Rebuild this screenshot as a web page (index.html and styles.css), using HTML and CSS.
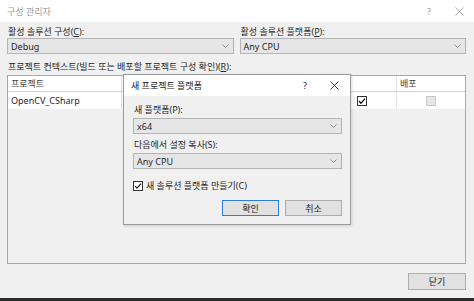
FILE: index.html
```html
<!DOCTYPE html>
<html lang="ko">
<head>
    <meta charset="UTF-8">
    <meta name="viewport" content="width=device-width, initial-scale=1.0">
    <title>구성 관리자</title>
    <link rel="stylesheet" href="styles.css">
</head>
<body>
<div class="window">
    <!-- Title bar -->
    <div class="titlebar">
        <span class="title">구성 관리자</span>
        <span class="tb-buttons">
            <span class="help">?</span>
            <svg class="close" width="9" height="9" viewBox="0 0 9 9"><path d="M0.5 0.5 L8.5 8.5 M8.5 0.5 L0.5 8.5" stroke="currentColor" stroke-width="0.9" fill="none"/></svg>
        </span>
    </div>

    <div class="content">
        <div class="top-row">
            <div class="field">
                <div class="label">활성 솔루션 구성(<u>C</u>):</div>
                <div class="select">
                    <span>Debug</span>
                    <svg class="chev" width="7" height="4" viewBox="0 0 7 4"><path d="M0.5 0.5 L3.5 3.5 L6.5 0.5" stroke="#8a8a8a" stroke-width="0.9" fill="none"/></svg>
                </div>
            </div>
            <div class="field">
                <div class="label">활성 솔루션 플랫폼(<u>P</u>):</div>
                <div class="select">
                    <span>Any CPU</span>
                    <svg class="chev" width="7" height="4" viewBox="0 0 7 4"><path d="M0.5 0.5 L3.5 3.5 L6.5 0.5" stroke="#8a8a8a" stroke-width="0.9" fill="none"/></svg>
                </div>
            </div>
        </div>

        <div class="label context-label">프로젝트 컨텍스트(빌드 또는 배포할 프로젝트 구성 확인)(<u>R</u>):</div>

        <!-- Project grid (the middle headers sit under the dialog) -->
        <div class="grid">
            <div class="grid-head">
                <div class="cell c-proj">프로젝트</div>
                <div class="cell c-conf"></div>
                <div class="cell c-plat"></div>
                <div class="cell c-build"></div>
                <div class="cell c-deploy">배포</div>
            </div>
            <div class="grid-row">
                <div class="cell c-proj">OpenCV_CSharp</div>
                <div class="cell c-conf"></div>
                <div class="cell c-plat"></div>
                <div class="cell c-build">
                    <svg class="check" width="10" height="10" viewBox="0 0 10 10"><rect x="0.5" y="0.5" width="9" height="9" fill="#fff" stroke="#333"/><path d="M2 5 L4 7.2 L8 2.6" stroke="#111" stroke-width="1.3" fill="none"/></svg>
                </div>
                <div class="cell c-deploy center">
                    <svg class="check" width="10" height="10" viewBox="0 0 10 10"><rect x="0.5" y="0.5" width="9" height="9" fill="#e6e6e6" stroke="#c8c8c8"/></svg>
                </div>
            </div>
        </div>

        <div class="actions">
            <button class="btn">닫기</button>
        </div>
    </div>

    <!-- New project platform dialog -->
    <div class="modal">
        <div class="modal-title">
            <span>새 프로젝트 플랫폼</span>
            <span class="tb-buttons dark">
                <span class="help">?</span>
                <svg class="close" width="9" height="9" viewBox="0 0 9 9"><path d="M0.5 0.5 L8.5 8.5 M8.5 0.5 L0.5 8.5" stroke="currentColor" stroke-width="0.9" fill="none"/></svg>
            </span>
        </div>
        <div class="modal-body">
            <div class="label">새 플랫폼(P):</div>
            <div class="select">
                <span>x64</span>
                <svg class="chev" width="7" height="4" viewBox="0 0 7 4"><path d="M0.5 0.5 L3.5 3.5 L6.5 0.5" stroke="#8a8a8a" stroke-width="0.9" fill="none"/></svg>
            </div>
            <div class="label">다음에서 설정 복사(S):</div>
            <div class="select">
                <span>Any CPU</span>
                <svg class="chev" width="7" height="4" viewBox="0 0 7 4"><path d="M0.5 0.5 L3.5 3.5 L6.5 0.5" stroke="#8a8a8a" stroke-width="0.9" fill="none"/></svg>
            </div>
            <div class="checkbox-row">
                <svg width="10" height="10" viewBox="0 0 10 10"><rect x="0.5" y="0.5" width="9" height="9" fill="#fff" stroke="#333"/><path d="M2 5 L4 7.2 L8 2.6" stroke="#111" stroke-width="1.1" fill="none"/></svg>
                <span>새 솔루션 플랫폼 만들기(C)</span>
            </div>
            <div class="modal-actions">
                <button class="btn primary">확인</button>
                <button class="btn">취소</button>
            </div>
        </div>
    </div>
</div>
<div class="taskbar"></div>
</body>
</html>
```

FILE: styles.css
```css
body {
    margin: 0;
    width: 474px;
    height: 301px;
    overflow: hidden;
    background: #f0f0f0;
    font-family: "Noto Sans", "Noto Sans CJK KR", sans-serif;
    font-size: 9px;
    color: #262626;
}
.window {
    position: relative;
    height: 298px;
    display: flex;
    flex-direction: column;
}
.titlebar {
    height: 22px;
    background: #fff;
    display: flex;
    align-items: center;
    justify-content: space-between;
    padding: 0 10px 0 7px;
    color: #9a9a9a;
}
.tb-buttons {
    display: flex;
    align-items: center;
    gap: 24px;
}
.tb-buttons .help {
    font-size: 9px;
}
.tb-buttons.dark {
    color: #222;
    gap: 23px;
}
.content {
    flex: 1;
    display: flex;
    flex-direction: column;
    padding: 3px 8px 0 7px;
}
.top-row {
    display: flex;
    gap: 6px;
}
.field {
    flex: 1;
}
.label {
    height: 13px;
    line-height: 13px;
    padding-left: 1px;
}
.select {
    height: 14px;
    border: 1px solid #b4b4b4;
    background: #e6e6e6;
    display: flex;
    align-items: center;
    justify-content: space-between;
    padding: 0 4px 0 3px;
}
.context-label {
    margin-top: 6px;
    margin-bottom: 2px;
}
.grid {
    height: 187px;
    border: 1px solid #a8a8a8;
    background: #f0f0f0;
}
.grid-head, .grid-row {
    display: grid;
    grid-template-columns: 114px 104px 103px 68px 1fr;
    background: #fff;
}
.grid-head {
    height: 15px;
    border-bottom: 1px solid #d5d5d5;
}
.grid-row {
    height: 17px;
}
.cell {
    display: flex;
    align-items: center;
    padding-left: 3px;
    border-right: 1px solid #e2e2e2;
}
.cell:last-child {
    border-right: none;
}
.grid-head .cell {
    color: #444;
}
.grid-row .c-build {
    padding-left: 28px;
}
.cell.center {
    justify-content: center;
    padding-left: 0;
}
.actions {
    display: flex;
    justify-content: flex-end;
    padding-top: 9px;
}
.btn {
    font-family: inherit;
    font-size: 9px;
    color: #262626;
    width: 58px;
    height: 17px;
    padding: 0;
    background: #e1e1e1;
    border: 1px solid #adadad;
}
.btn.primary {
    border-color: #2a7ed4;
}
.modal {
    position: absolute;
    left: 123px;
    top: 74px;
    width: 226px;
    height: 149px;
    border: 1px solid #9a9a9a;
    background: #f0f0f0;
    box-shadow: 1px 1px 3px rgba(0, 0, 0, 0.15);
    display: flex;
    flex-direction: column;
}
.modal-title {
    height: 21px;
    background: #fff;
    display: flex;
    align-items: center;
    justify-content: space-between;
    padding: 0 11px 0 7px;
    color: #222;
}
.modal-body {
    padding: 6px 8px 0 9px;
    display: flex;
    flex-direction: column;
}
.modal-body .label {
    height: 16px;
    line-height: 16px;
}
.modal-body .select {
    margin-bottom: 3px;
}
.checkbox-row {
    display: flex;
    align-items: center;
    gap: 3px;
    margin-top: 7px;
}
.modal-actions {
    display: flex;
    justify-content: flex-end;
    gap: 6px;
    margin-top: 8px;
}
.modal-actions .btn {
    width: 57px;
    height: 16px;
}
.taskbar {
    height: 3px;
    background: #2b2b2b;
}
```
